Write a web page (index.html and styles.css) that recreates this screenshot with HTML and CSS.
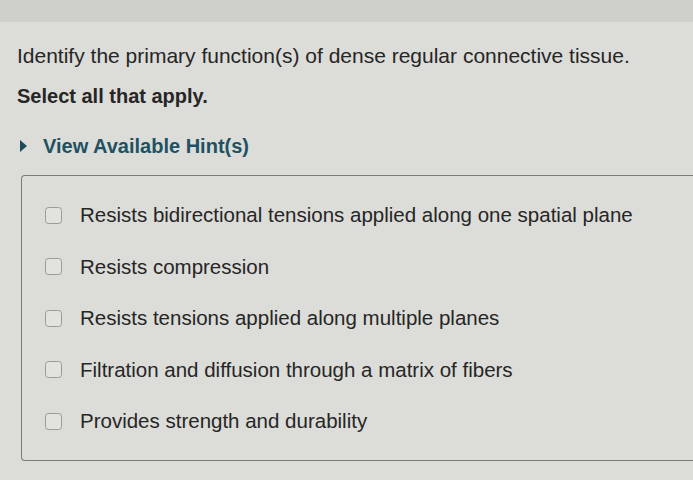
FILE: index.html
```html
<!DOCTYPE html>
<html>
<head>
<meta charset="utf-8">
<link rel="stylesheet" href="styles.css">
</head>
<body>
<div class="topbar"></div>
<main class="page">
  <p class="question">Identify the primary function(s) of dense regular connective tissue.</p>
  <p class="instruction">Select all that apply.</p>
  <div class="hint"><span class="tri"></span><span>View Available Hint(s)</span></div>
  <div class="box">
    <label class="opt"><span class="cb"></span><span>Resists bidirectional tensions applied along one spatial plane</span></label>
    <label class="opt"><span class="cb"></span><span>Resists compression</span></label>
    <label class="opt"><span class="cb"></span><span>Resists tensions applied along multiple planes</span></label>
    <label class="opt"><span class="cb"></span><span>Filtration and diffusion through a matrix of fibers</span></label>
    <label class="opt"><span class="cb"></span><span>Provides strength and durability</span></label>
  </div>
</main>
</body>
</html>
```
FILE: styles.css
```css
html, body {
  margin: 0;
  padding: 0;
  width: 693px;
  height: 480px;
  overflow: hidden;
  background: #dcdcd8;
  font-family: "Liberation Sans", Arial, sans-serif;
  color: #262626;
}
.topbar {
  height: 22px;
  background: #cfcfcb;
}
.page {
  padding: 0 0 0 17px;
}
.question {
  margin: 22px 0 0 0;
  font-size: 21px;
  line-height: 24px;
}
.instruction {
  margin: 16px 0 0 0;
  font-size: 20px;
  font-weight: bold;
  line-height: 24px;
}
.hint {
  margin-top: 26px;
  display: flex;
  align-items: center;
  gap: 16px;
  padding-left: 3px;
  color: #1d5262;
  font-weight: bold;
  font-size: 20px;
  line-height: 24px;
}
.tri {
  width: 0;
  height: 0;
  border-top: 6.5px solid transparent;
  border-bottom: 6.5px solid transparent;
  border-left: 7.5px solid #1d4b5a;
}
.box {
  margin: 17px 0 0 4px;
  border: 1.5px solid #7a7a78;
  border-right: none;
  border-radius: 4px 0 0 4px;
  height: 257px;
  padding: 27px 0 0 23px;
  display: flex;
  flex-direction: column;
  gap: 27.5px;
}
.opt {
  display: flex;
  align-items: center;
  gap: 18px;
  font-size: 20.5px;
  line-height: 24px;
}
.cb {
  width: 15px;
  height: 15px;
  border: 1.5px solid #9a9a98;
  border-radius: 3.5px;
  background: #e2e2de;
  flex: none;
}
```
